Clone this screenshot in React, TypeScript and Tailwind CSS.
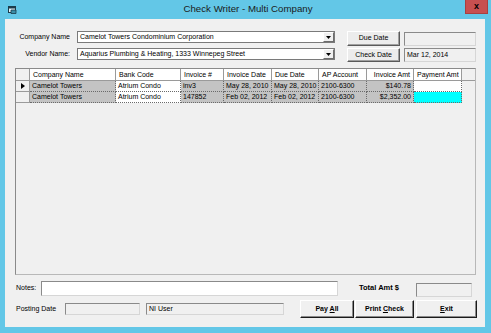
const font = "font-['Liberation_Sans',Arial,sans-serif]";

const cols = [
  { label: 'Company Name', cls: 'w-[86px]' },
  { label: 'Bank Code', cls: 'w-[65px]' },
  { label: 'Invoice #', cls: 'w-[43px]' },
  { label: 'Invoice Date', cls: 'w-[48px]' },
  { label: 'Due Date', cls: 'w-[47px]' },
  { label: 'AP Account', cls: 'w-[48px]' },
  { label: 'Invoice Amt', cls: 'w-[47px] justify-end' },
  { label: 'Payment Amt', cls: 'w-[48px]' },
];

const rows = [
  { cells: ['Camelot Towers', 'Atrium Condo', 'inv3', 'May 28, 2010', 'May 28, 2010', '2100-6300', '$140.78', ''], pay: 'bg-white', current: true },
  { cells: ['Camelot Towers', 'Atrium Condo', '147852', 'Feb 02, 2012', 'Feb 02, 2012', '2100-6300', '$2,352.00', ''], pay: 'bg-[#00ffff]', current: false },
];

function Combo({ value }: { value: string }) {
  return (
    <div className="flex h-[12px] w-[258px] items-center border border-[#7a7a7a] bg-white">
      <span className="flex-1 truncate pl-[2px] leading-[10px]">{value}</span>
      <span className="flex h-[10px] w-[11px] items-center justify-center border-t border-l border-b border-r border-t-white border-l-white border-b-[#6d6d6d] border-r-[#6d6d6d] bg-[#f0f0f0]">
        <svg width="5" height="3" viewBox="0 0 5 3"><path d="M0 0h5L2.5 3z" fill="#000" /></svg>
      </span>
    </div>
  );
}

function Box({ cls, value, white }: { cls: string; value?: string; white?: boolean }) {
  return (
    <div
      className={`flex items-center border border-t-[#8a8a8a] border-l-[#8a8a8a] border-b-[#d6d6d6] border-r-[#d6d6d6] pl-[2px] leading-[10px] ${white ? 'bg-white' : 'bg-[#f0f0f0]'} ${cls}`}
    >
      {value}
    </div>
  );
}

function SmallButton({ label, cls }: { label: string; cls: string }) {
  return (
    <div className={`flex items-center justify-center border border-t-white border-l-white border-b-[#5a5a5a] border-r-[#5a5a5a] bg-[#ececec] shadow-[inset_-1px_-1px_0_#a0a0a0] ${cls}`}>
      {label}
    </div>
  );
}

function BigButton({ pre, u, post, cls }: { pre: string; u: string; post: string; cls: string }) {
  return (
    <div className={`flex h-[18px] items-center justify-center border border-t-white border-l-white border-b-[#1a1a1a] border-r-[#1a1a1a] bg-[#f0f0f0] font-bold shadow-[inset_-1px_-1px_0_#8a8a8a] ${cls}`}>
      <span>
        {pre}
        <span className="underline">{u}</span>
        {post}
      </span>
    </div>
  );
}

export default function App() {
  return (
    <div className={`flex h-[333px] w-[491px] flex-col bg-[#63c7e7] text-[7px] text-black ${font}`}>
      {/* title bar */}
      <div className="flex h-[19px] items-start">
        <div className="ml-[8px] mt-[6px] w-[9px]">
          <svg width="9" height="8" viewBox="0 0 9 8">
            <rect x="0.5" y="0.5" width="7" height="6" fill="#e8f4f8" stroke="#1b3b4a" />
            <rect x="1" y="1" width="6" height="1.5" fill="#1b3b4a" />
            <path d="M3 4h5v3.5H3z" fill="#3a8ea8" stroke="#1b3b4a" strokeWidth="0.8" />
          </svg>
        </div>
        <div className="flex-1 pl-[14px] pt-[3px] text-center text-[9.7px] leading-[12px] text-[#1a1a1a]">
          Check Writer - Multi Company
        </div>
        <div className="mr-[3px] flex h-[14px] w-[23px] items-center justify-center border border-t-0 border-[#a84040] bg-[#c75050] text-[9px] font-bold leading-none text-black">
          x
        </div>
      </div>

      {/* client */}
      <div className="ml-[5px] flex h-[308px] w-[480px] flex-col bg-[#f0f0f0]">
        {/* header fields */}
        <div className="mt-[12px] flex">
          <div className="flex w-[65px] flex-col items-end gap-[5px]">
            <div className="h-[12px] leading-[11px]">Company Name</div>
            <div className="h-[12px] leading-[12px]">Vendor Name:</div>
          </div>
          <div className="ml-[7px] flex flex-col gap-[5px]">
            <Combo value="Camelot Towers Condominium Corporation" />
            <Combo value="Aquarius Plumbing & Heating, 1333 Winnepeg Street" />
          </div>
          <div className="ml-[12px] flex flex-col gap-[2px]">
            <div className="flex items-center">
              <SmallButton label="Due Date" cls="h-[15px] w-[53px]" />
              <Box cls="ml-[4px] h-[14px] w-[72px]" />
            </div>
            <div className="flex items-center">
              <SmallButton label="Check Date" cls="h-[14px] w-[53px]" />
              <Box cls="ml-[4px] h-[14px] w-[72px]" value="Mar 12, 2014" />
            </div>
          </div>
        </div>

        {/* grid */}
        <div className="ml-[10px] mt-[6px] h-[207px] w-[461px] border border-t-[#8a8a8a] border-l-[#8a8a8a] border-b-[#b8b8b8] border-r-[#b8b8b8] bg-[#f0f0f0]">
          <div className="flex h-[12px] border-b border-[#9a9a9a]">
            <div className="w-[14px] border-r border-[#9a9a9a]" />
            {cols.map((c) => (
              <div key={c.label} className={`flex items-center overflow-hidden whitespace-nowrap border-r border-[#9a9a9a] bg-white px-[3px] leading-[11px] ${c.cls}`}>
                {c.label}
              </div>
            ))}
          </div>
          {rows.map((r, ri) => (
            <div key={ri} className="flex h-[11px]">
              <div className="flex w-[14px] items-center justify-center border-r border-b border-[#9a9a9a] bg-[#f0f0f0]">
                {r.current && (
                  <svg width="4" height="6" viewBox="0 0 4 6"><path d="M0 0l4 3-4 3z" fill="#000" /></svg>
                )}
              </div>
              {r.cells.map((v, ci) => {
                const bg = ci === 1 ? 'bg-white' : ci === 7 ? r.pay : 'bg-[#c3c3c3]';
                return (
                  <div
                    key={ci}
                    className={`flex items-center overflow-hidden whitespace-nowrap border-r border-b border-dotted border-[#6a6a6a] px-[2px] leading-[10px] ${bg} ${cols[ci].cls}`}
                  >
                    {v}
                  </div>
                );
              })}
            </div>
          ))}
        </div>

        {/* notes row */}
        <div className="mt-[5px] flex h-[16px] items-center">
          <span className="ml-[11px] w-[25px]">Notes:</span>
          <Box cls="h-[15px] w-[297px]" white />
          <span className="ml-[21px] w-[52px] text-[7.5px] font-bold">Total Amt $</span>
          <Box cls="ml-[5px] mt-[3px] h-[14px] w-[56px]" />
        </div>

        {/* bottom row */}
        <div className="mt-[4px] flex h-[18px] items-center">
          <span className="ml-[11px] w-[49px]">Posting Date</span>
          <Box cls="h-[12px] w-[75px]" />
          <Box cls="ml-[6px] h-[12px] w-[138px]" value="NI User" />
          <BigButton pre="Pay " u="A" post="ll" cls="ml-[16px] w-[54px]" />
          <BigButton pre="Print " u="C" post="heck" cls="ml-[1px] w-[59px]" />
          <BigButton pre="" u="E" post="xit" cls="ml-[2px] w-[61px]" />
        </div>
      </div>
    </div>
  );
}
